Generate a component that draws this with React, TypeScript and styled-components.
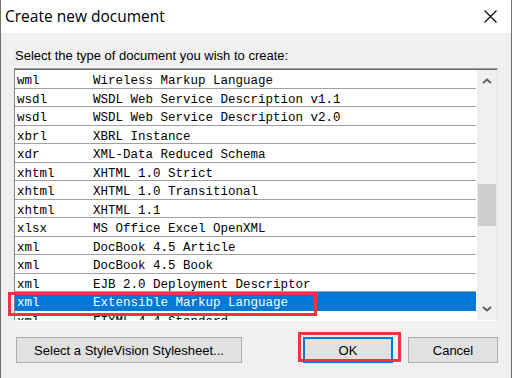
import styled, { createGlobalStyle } from "styled-components";

type DocType = { ext: string; name: string };

const docTypes: DocType[] = [
  { ext: "wml", name: "Wireless Markup Language" },
  { ext: "wsdl", name: "WSDL Web Service Description v1.1" },
  { ext: "wsdl", name: "WSDL Web Service Description v2.0" },
  { ext: "xbrl", name: "XBRL Instance" },
  { ext: "xdr", name: "XML-Data Reduced Schema" },
  { ext: "xhtml", name: "XHTML 1.0 Strict" },
  { ext: "xhtml", name: "XHTML 1.0 Transitional" },
  { ext: "xhtml", name: "XHTML 1.1" },
  { ext: "xlsx", name: "MS Office Excel OpenXML" },
  { ext: "xml", name: "DocBook 4.5 Article" },
  { ext: "xml", name: "DocBook 4.5 Book" },
  { ext: "xml", name: "EJB 2.0 Deployment Descriptor" },
  { ext: "xml", name: "Extensible Markup Language" },
  { ext: "xml", name: "FIXML 4.4 Standard" },
];

const SELECTED = 12;

const GlobalStyle = createGlobalStyle`
  html, body {
    margin: 0;
    padding: 0;
    overflow: hidden;
    background: #f0f0f0;
  }
`;

export default function App() {
  return (
    <>
      <GlobalStyle />
      <Window>
        <TitleBar>
          <Title>Create new document</Title>
          <CloseIcon width="13" height="13" viewBox="0 0 13 13">
            <path d="M0.5 0.5 L12.5 12.5 M12.5 0.5 L0.5 12.5" stroke="#000" strokeWidth="1.1" />
          </CloseIcon>
        </TitleBar>
        <Body>
          <Label>Select the type of document you wish to create:</Label>
          <ListFrame>
            <ListInner>
              <Rows>
                {docTypes.map((d, i) => (
                  <Row key={i} $selected={i === SELECTED}>
                    <span>{d.ext}</span>
                    <span>{d.name}</span>
                  </Row>
                ))}
              </Rows>
              <ScrollBar>
                <ArrowButton>
                  <svg width="10" height="6" viewBox="0 0 10 6">
                    <polyline points="1,5 5,1.5 9,5" fill="none" stroke="#606060" strokeWidth="2" />
                  </svg>
                </ArrowButton>
                <Track>
                  <Thumb $offset={92} $size={42} />
                </Track>
                <ArrowButton>
                  <svg width="10" height="6" viewBox="0 0 10 6">
                    <polyline points="1,1 5,4.5 9,1" fill="none" stroke="#606060" strokeWidth="2" />
                  </svg>
                </ArrowButton>
              </ScrollBar>
            </ListInner>
            <Highlight $left={-7} $top={223} $width={309} $height={24} />
          </ListFrame>
          <Footer>
            <Button $width={226}>Select a StyleVision Stylesheet...</Button>
            <ButtonGroup>
              <HighlightWrap>
                <Button $width={90} $default>OK</Button>
                <Highlight $left={-5} $top={-5} $width={103} $height={30} />
              </HighlightWrap>
              <Button $width={90}>Cancel</Button>
            </ButtonGroup>
          </Footer>
        </Body>
      </Window>
    </>
  );
}

const Window = styled.div`
  width: 512px;
  height: 378px;
  box-sizing: border-box;
  border-left: 1px solid #707070;
  border-right: 1px solid #707070;
  background: #f0f0f0;

  display: flex;
  flex-direction: column;
  overflow: hidden;
`;

const TitleBar = styled.div`
  height: 33px;
  flex-shrink: 0;
  background: #ffffff;

  display: flex;
  align-items: center;
  justify-content: space-between;

  padding: 0 14px 0 4px;
`;

const Title = styled.div`
  font-family: "Open Sans", "Liberation Sans", sans-serif;
  font-size: 15.5px;
  line-height: 33px;
  color: #000;
`;

const CloseIcon = styled.svg`
  display: block;
`;

const Body = styled.div`
  flex: 1;
  display: flex;
  flex-direction: column;

  padding: 0 13px;
`;

const Label = styled.div`
  margin-top: 15px;
  padding-left: 1px;

  font-family: "Liberation Sans", Arial, sans-serif;
  font-size: 13px;
  line-height: 15px;
  color: #000;
`;

const ListFrame = styled.div`
  position: relative;
  margin-top: 5px;
  height: 253px;
  box-sizing: border-box;

  border-top: 1px solid #a0a0a0;
  border-left: 1px solid #828282;
  border-right: 1px solid #e3e3e3;
  border-bottom: 1px solid #ffffff;
`;

const ListInner = styled.div`
  height: 100%;
  box-sizing: border-box;
  border-top: 1px solid #696969;
  background: #ffffff;

  display: flex;
  overflow: hidden;
`;

const Rows = styled.div`
  flex: 1;
  overflow: hidden;
`;

const Row = styled.div<{ $selected?: boolean }>`
  height: 18.5px;
  box-sizing: border-box;
  padding-top: 2px;
  padding-left: 2px;

  display: grid;
  grid-template-columns: 76px 1fr;

  font-family: "Liberation Mono", "Courier New", monospace;
  font-size: 12.5px;
  line-height: 18.5px;
  white-space: nowrap;

  color: ${(p) => (p.$selected ? "#ffffff" : "#000000")};
  background: ${(p) => (p.$selected ? "#0078d7" : "transparent")};
  border-bottom: 1px solid ${(p) => (p.$selected ? "#0078d7" : "#a0a0a0")};
`;

const ScrollBar = styled.div`
  width: 20px;
  margin-left: 1px;
  background: #f0f0f0;

  display: flex;
  flex-direction: column;
`;

const ArrowButton = styled.div`
  height: 22px;
  display: flex;
  align-items: center;
  justify-content: center;

  svg {
    display: block;
  }
`;

const Track = styled.div`
  flex: 1;
  display: flex;
  flex-direction: column;
  padding: 0 1px;
`;

const Thumb = styled.div<{ $offset: number; $size: number }>`
  margin-top: ${(p) => p.$offset}px;
  height: ${(p) => p.$size}px;
  background: #cdcdcd;
`;

const Highlight = styled.div<{ $left: number; $top: number; $width: number; $height: number }>`
  position: absolute;
  left: ${(p) => p.$left}px;
  top: ${(p) => p.$top}px;
  width: ${(p) => p.$width}px;
  height: ${(p) => p.$height}px;
  box-sizing: border-box;
  border: 3px solid #ef3340;
  pointer-events: none;
`;

const Footer = styled.div`
  margin-top: 16px;
  padding-left: 2px;

  display: flex;
  align-items: center;
  justify-content: space-between;
`;

const ButtonGroup = styled.div`
  display: flex;
  gap: 15px;
`;

const HighlightWrap = styled.div`
  position: relative;
`;

const Button = styled.button<{ $width: number; $default?: boolean }>`
  width: ${(p) => p.$width}px;
  height: 26px;
  box-sizing: border-box;
  padding: 0;
  margin: 0;

  background: #e1e1e1;
  border: ${(p) => (p.$default ? "2px solid #0078d7" : "1px solid #adadad")};
  border-radius: 0;

  font-family: "Liberation Sans", Arial, sans-serif;
  font-size: 13px;
  color: #000;
`;
